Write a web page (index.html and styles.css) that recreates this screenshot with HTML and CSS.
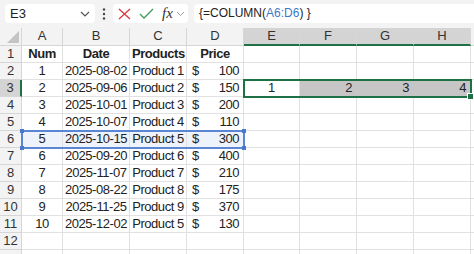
FILE: index.html
```html
<!DOCTYPE html>
<html lang="en">
<head>
    <meta charset="UTF-8">
    <title>Sheet</title>
    <link rel="stylesheet" href="styles.css">
</head>
<body>
    <div class="toolbar">
        <div class="namebox">
            <span>E3</span>
            <svg width="10" height="6" viewBox="0 0 10 6"><path d="M1 1 L5 5 L9 1" fill="none" stroke="#555" stroke-width="1.2"/></svg>
        </div>
        <div class="dots">
            <svg width="4" height="14" viewBox="0 0 4 14"><circle cx="2" cy="2.5" r="1.2" fill="#444"/><circle cx="2" cy="7" r="1.2" fill="#444"/><circle cx="2" cy="11.5" r="1.2" fill="#444"/></svg>
        </div>
        <div class="fbtns">
            <svg class="cancel" width="13" height="12" viewBox="0 0 13 12"><path d="M1 1 L12 11 M12 1 L1 11" stroke="#d9363e" stroke-width="1.3"/></svg>
            <svg class="enter" width="15" height="11" viewBox="0 0 15 11"><path d="M1 6 L5 10 L14 1" fill="none" stroke="#3f9b55" stroke-width="1.3"/></svg>
            <span class="fx">fx</span>
            <svg class="more" width="9" height="6" viewBox="0 0 9 6"><path d="M1 1 L4.5 4.5 L8 1" fill="none" stroke="#999" stroke-width="1"/></svg>
        </div>
        <div class="formula">{=COLUMN(<span class="ref">A6:D6</span>) }</div>
    </div>

    <div class="sheet">
        <div class="grid">
            <!-- column headers -->
            <div class="ch corner"><svg width="12" height="12" viewBox="0 0 12 12"><polygon points="12,0 12,12 0,12" fill="#c4c4c4"/></svg></div>
            <div class="ch">A</div><div class="ch">B</div><div class="ch">C</div><div class="ch">D</div>
            <div class="ch on">E</div><div class="ch on">F</div><div class="ch on">G</div><div class="ch on">H</div><div class="ch"></div>
            <!-- 1 -->
            <div class="rh">1</div>
            <div class="cell c b">Num</div><div class="cell c b">Date</div><div class="cell c b">Products</div><div class="cell c b">Price</div>
            <div class="cell"></div><div class="cell"></div><div class="cell"></div><div class="cell"></div><div class="cell"></div>
            <!-- 2 -->
            <div class="rh">2</div>
            <div class="cell c">1</div><div class="cell c">2025-08-02</div><div class="cell c">Product 1</div><div class="cell n"><span>$</span><span>100</span></div>
            <div class="cell"></div><div class="cell"></div><div class="cell"></div><div class="cell"></div><div class="cell"></div>
            <!-- 3 -->
            <div class="rh on">3</div>
            <div class="cell c">2</div><div class="cell c">2025-09-06</div><div class="cell c">Product 2</div><div class="cell n"><span>$</span><span>150</span></div>
            <div class="cell c">1</div><div class="cell r hl">2</div><div class="cell r hl">3</div><div class="cell r hl">4</div><div class="cell"></div>
            <!-- 4 -->
            <div class="rh">4</div>
            <div class="cell c">3</div><div class="cell c">2025-10-01</div><div class="cell c">Product 3</div><div class="cell n"><span>$</span><span>200</span></div>
            <div class="cell"></div><div class="cell"></div><div class="cell"></div><div class="cell"></div><div class="cell"></div>
            <!-- 5 -->
            <div class="rh">5</div>
            <div class="cell c">4</div><div class="cell c">2025-10-07</div><div class="cell c">Product 4</div><div class="cell n"><span>$</span><span>110</span></div>
            <div class="cell"></div><div class="cell"></div><div class="cell"></div><div class="cell"></div><div class="cell"></div>
            <!-- 6 -->
            <div class="rh">6</div>
            <div class="cell c pk">5</div><div class="cell c pk">2025-10-15</div><div class="cell c pk">Product 5</div><div class="cell n pk"><span>$</span><span>300</span></div>
            <div class="cell"></div><div class="cell"></div><div class="cell"></div><div class="cell"></div><div class="cell"></div>
            <!-- 7 -->
            <div class="rh">7</div>
            <div class="cell c">6</div><div class="cell c">2025-09-20</div><div class="cell c">Product 6</div><div class="cell n"><span>$</span><span>400</span></div>
            <div class="cell"></div><div class="cell"></div><div class="cell"></div><div class="cell"></div><div class="cell"></div>
            <!-- 8 -->
            <div class="rh">8</div>
            <div class="cell c">7</div><div class="cell c">2025-11-07</div><div class="cell c">Product 7</div><div class="cell n"><span>$</span><span>210</span></div>
            <div class="cell"></div><div class="cell"></div><div class="cell"></div><div class="cell"></div><div class="cell"></div>
            <!-- 9 -->
            <div class="rh">9</div>
            <div class="cell c">8</div><div class="cell c">2025-08-22</div><div class="cell c">Product 8</div><div class="cell n"><span>$</span><span>175</span></div>
            <div class="cell"></div><div class="cell"></div><div class="cell"></div><div class="cell"></div><div class="cell"></div>
            <!-- 10 -->
            <div class="rh">10</div>
            <div class="cell c">9</div><div class="cell c">2025-11-25</div><div class="cell c">Product 9</div><div class="cell n"><span>$</span><span>370</span></div>
            <div class="cell"></div><div class="cell"></div><div class="cell"></div><div class="cell"></div><div class="cell"></div>
            <!-- 11 -->
            <div class="rh">11</div>
            <div class="cell c">10</div><div class="cell c">2025-12-02</div><div class="cell c">Product 5</div><div class="cell n"><span>$</span><span>130</span></div>
            <div class="cell"></div><div class="cell"></div><div class="cell"></div><div class="cell"></div><div class="cell"></div>
            <!-- 12 -->
            <div class="rh">12</div>
            <div class="cell"></div><div class="cell"></div><div class="cell"></div><div class="cell"></div>
            <div class="cell"></div><div class="cell"></div><div class="cell"></div><div class="cell"></div><div class="cell"></div>
            <!-- 13 -->
            <div class="rh"></div>
            <div class="cell"></div><div class="cell"></div><div class="cell"></div><div class="cell"></div>
            <div class="cell"></div><div class="cell"></div><div class="cell"></div><div class="cell"></div><div class="cell"></div>
        </div>

        <!-- overlays: active selection and the referenced range -->
        <div class="sel-box"><i class="fill-handle"></i></div>
        <div class="ref-box">
            <i class="knob tl"></i><i class="knob tr"></i><i class="knob bl"></i><i class="knob br"></i>
        </div>
    </div>
</body>
</html>
```

FILE: styles.css
```css
body {
    margin: 0;
    height: 254px;
    background: #ffffff;
    color: #222222;
    font-family: "Liberation Sans", Arial, sans-serif;
}

/* formula bar */
.toolbar {
    display: flex;
    align-items: flex-start;
    height: 28px;
    box-sizing: border-box;
    padding: 4px 0 0 5px;
    background: #f3f3f3;
}
.namebox {
    display: flex;
    align-items: center;
    justify-content: space-between;
    width: 90px;
    height: 19px;
    box-sizing: border-box;
    padding: 0 5px 0 5px;
    background: #ffffff;
    border-radius: 4px;
    font-size: 13px;
    color: #222;
}
.dots {
    display: flex;
    align-items: center;
    justify-content: center;
    width: 18px;
    height: 19px;
}
.fbtns {
    display: flex;
    align-items: center;
    width: 75px;
    height: 19px;
    box-sizing: border-box;
    padding-left: 5px;
    background: #ffffff;
    border-radius: 4px;
}
.fbtns .enter {
    margin-left: 8px;
}
.fx {
    margin-left: 8px;
    font-family: "Liberation Serif", serif;
    font-style: italic;
    font-size: 15px;
    color: #333;
    line-height: 19px;
}
.fbtns .more {
    margin-left: 3px;
}
.formula {
    flex: 1;
    height: 19px;
    margin-left: 6px;
    padding-left: 5px;
    background: #ffffff;
    border-radius: 4px 0 0 4px;
    font-size: 12px;
    line-height: 19px;
    color: #222;
    white-space: nowrap;
}
.formula .ref {
    color: #3c78c8;
}

/* grid */
.sheet {
    position: relative;
    height: 226px;
    overflow: hidden;
}
.grid {
    display: grid;
    grid-template-columns: 22px 41px 67px 57px 57px 56px 57px 57px 57px 20px;
    grid-template-rows: 18px;
    grid-auto-rows: 17px;
    width: 491px;
    font-size: 13px;
}
.grid > div {
    box-sizing: border-box;
    white-space: nowrap;
    overflow: hidden;
    line-height: 16px;
}
.ch, .rh {
    background: #f3f3f3;
    color: #333;
    text-align: center;
    border-right: 1px solid #d6d6d6;
    border-bottom: 1px solid #d6d6d6;
}
.ch {
    line-height: 17px;
}
.ch.on, .rh.on {
    background: #d4d4d4;
}
.ch.on {
    border-bottom: 2px solid #1e7145;
}
.rh.on {
    border-right: 2px solid #1e7145;
}
.corner {
    display: flex;
    align-items: flex-end;
    justify-content: flex-end;
    padding: 0 2px 2px 0;
}
.cell {
    padding: 0 2px;
    border-right: 1px solid #e1e1e1;
    border-bottom: 1px solid #e1e1e1;
    letter-spacing: -0.45px;
}
.c { text-align: center; }
.r { text-align: right; padding-right: 4px; }
.b { font-weight: bold; }
.n {
    display: flex;
    justify-content: space-between;
    padding: 0 4px 0 5px;
}
.grid .hl {
    background: #c6c6c6;
    border-right-color: #c6c6c6;
}
.pk {
    background: #edf2fb;
}

.sel-box {
    position: absolute;
    left: 243px;
    top: 51px;
    width: 229px;
    height: 19px;
    box-sizing: border-box;
    border: 2px solid #1e7145;
}
.fill-handle {
    position: absolute;
    right: -4px;
    bottom: -4px;
    width: 5px;
    height: 5px;
    background: #1e7145;
    border: 1px solid #ffffff;
}
.ref-box {
    position: absolute;
    left: 21px;
    top: 102px;
    width: 224px;
    height: 19px;
    box-sizing: border-box;
    border: 2px solid #5a86d4;
}
.knob {
    position: absolute;
    width: 4px;
    height: 4px;
    background: #4a78cc;
}
.knob.tl { left: -3px; top: -3px; }
.knob.tr { right: -3px; top: -3px; }
.knob.bl { left: -3px; bottom: -3px; }
.knob.br { right: -3px; bottom: -3px; }
```
